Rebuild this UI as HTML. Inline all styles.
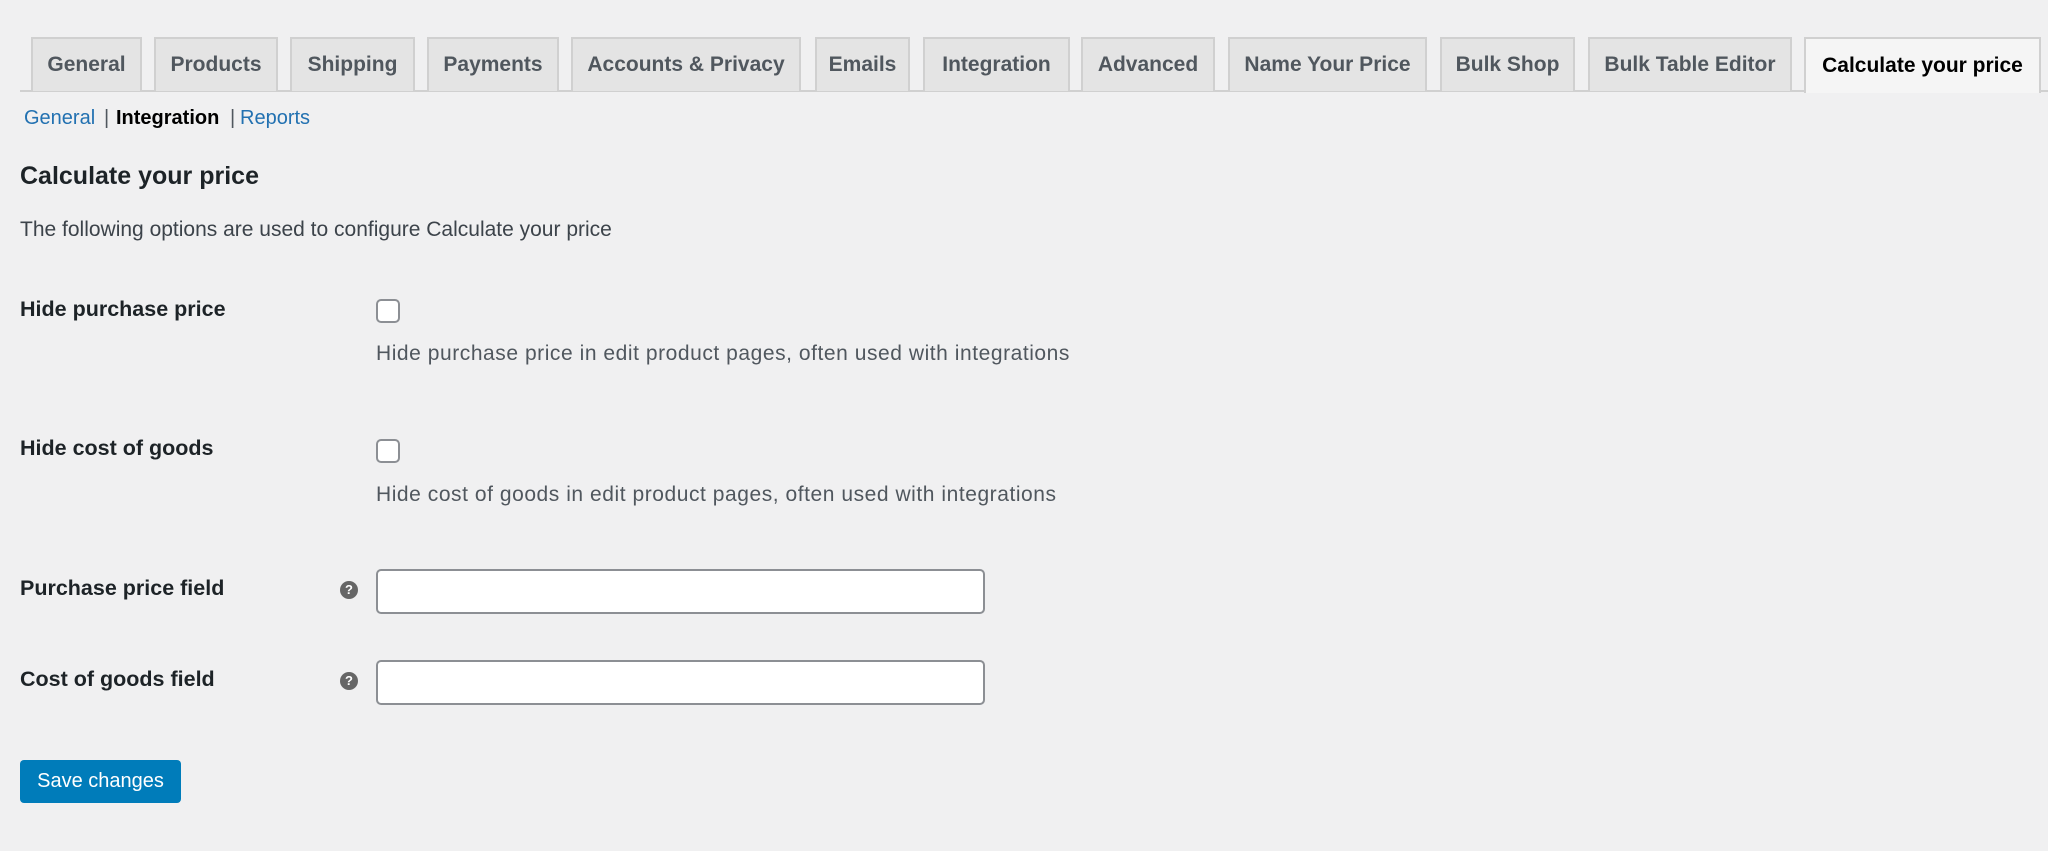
<!DOCTYPE html>
<html><head><meta charset="utf-8"><style>
*{box-sizing:border-box;margin:0;padding:0}
body{width:2048px;height:851px;background:#f0f0f1;font-family:"Liberation Sans",sans-serif;color:#1d2327;position:relative;overflow:hidden}
.line{position:absolute;left:20px;right:0;top:90px;border-top:2px solid #d0d0d0}
.tab{position:absolute;top:37px;height:54px;background:#e4e4e4;border:2px solid #d0d0d0;border-bottom:none;color:#50575e;font-weight:bold;font-size:21px;display:flex;align-items:center;justify-content:center}
.tab.act{background:#f5f5f5;color:#000;height:56px;z-index:2}
.a{position:absolute;white-space:nowrap}
.lbl{font-weight:bold;font-size:21.5px;left:20px;color:#1d2327}
.desc{font-size:21px;letter-spacing:0.55px;color:#50575e;left:376px}
.cb{position:absolute;left:376px;width:24px;height:24px;border:2px solid #8c8f94;border-radius:5px;background:#fff}
.inp{position:absolute;left:376px;width:609px;height:45px;border:2px solid #8c8f94;border-radius:5px;background:#fff}
.help{position:absolute;left:340px;width:18px;height:18px;border-radius:50%;background:#666;color:#fff;font-size:13px;font-weight:bold;text-align:center;line-height:18px}
.sn{position:absolute;top:107px;font-size:20px}
</style></head><body>
<div class="line"></div>
<div class="tab" style="left:31px;width:111px">General</div>
<div class="tab" style="left:154px;width:124px">Products</div>
<div class="tab" style="left:290px;width:125px">Shipping</div>
<div class="tab" style="left:427px;width:132px">Payments</div>
<div class="tab" style="left:571px;width:230px">Accounts &amp; Privacy</div>
<div class="tab" style="left:815px;width:95px">Emails</div>
<div class="tab" style="left:923px;width:147px">Integration</div>
<div class="tab" style="left:1081px;width:134px">Advanced</div>
<div class="tab" style="left:1228px;width:199px">Name Your Price</div>
<div class="tab" style="left:1440px;width:135px">Bulk Shop</div>
<div class="tab" style="left:1588px;width:204px">Bulk Table Editor</div>
<div class="tab act" style="left:1804px;width:237px">Calculate your price</div>

<div class="sn" style="left:24px;color:#2271b1">General</div>
<div class="sn" style="left:104px;color:#50575e">|</div>
<div class="sn" style="left:116px;color:#000;font-weight:bold">Integration</div>
<div class="sn" style="left:230px;color:#50575e">|</div>
<div class="sn" style="left:240px;color:#2271b1">Reports</div>
<div class="a" style="left:20px;top:162px;font-size:25px;font-weight:bold">Calculate your price</div>
<div class="a" style="left:20px;top:218px;font-size:21px;color:#3c434a">The following options are used to configure Calculate your price</div>

<div class="a lbl" style="top:297px">Hide purchase price</div>
<div class="cb" style="top:299px"></div>
<div class="a desc" style="top:342px">Hide purchase price in edit product pages, often used with integrations</div>

<div class="a lbl" style="top:436px">Hide cost of goods</div>
<div class="cb" style="top:439px"></div>
<div class="a desc" style="top:483px">Hide cost of goods in edit product pages, often used with integrations</div>

<div class="a lbl" style="top:576px">Purchase price field</div>
<div class="help" style="top:581px">?</div>
<div class="inp" style="top:569px"></div>

<div class="a lbl" style="top:667px">Cost of goods field</div>
<div class="help" style="top:672px">?</div>
<div class="inp" style="top:660px"></div>

<div class="a" style="left:20px;top:760px;width:161px;height:43px;background:#007cba;border-radius:4px;color:#fff;font-size:20px;display:flex;align-items:center;justify-content:center">Save changes</div>
</body></html>
